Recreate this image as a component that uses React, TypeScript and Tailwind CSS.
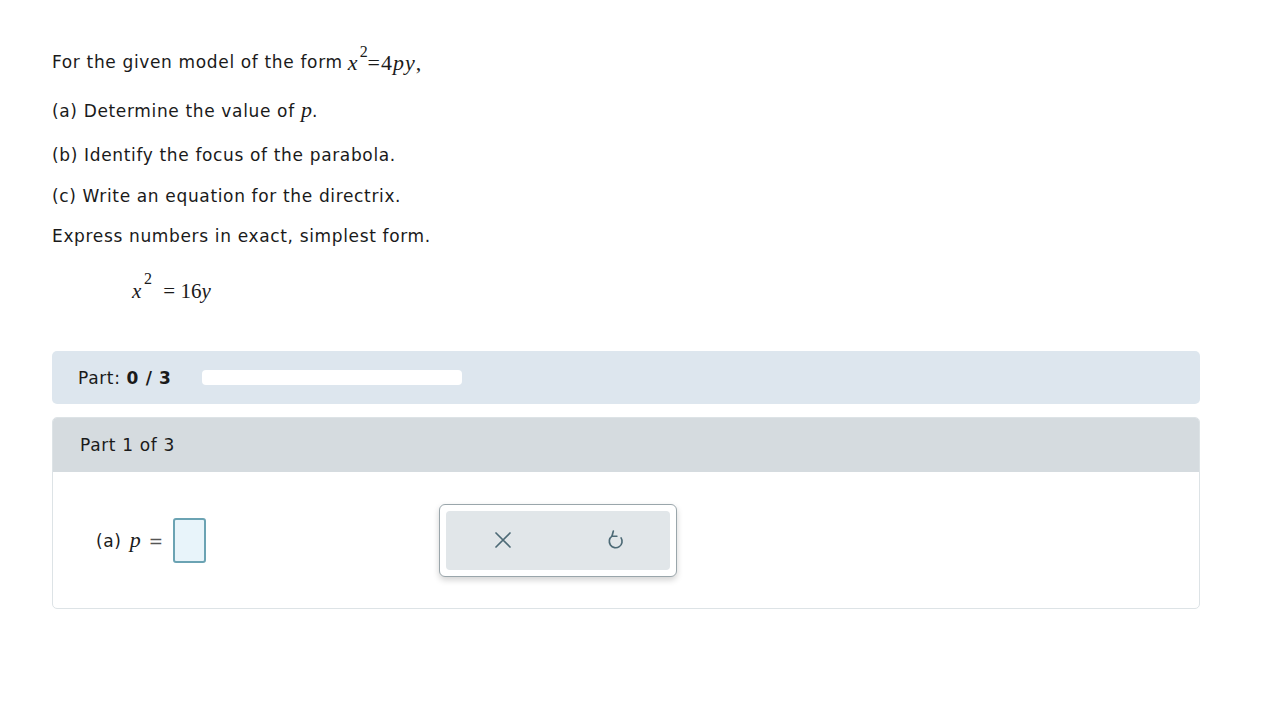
function Sup({ base, exp, gap }: { base: string; exp: string; gap: string }) {
  return (
    <span className={`relative inline-block ${gap}`}>
      <i>{base}</i>
      <span className="absolute -top-[8px] left-[12px] text-[16px] not-italic leading-none">{exp}</span>
    </span>
  );
}

function CloseIcon() {
  return (
    <svg width="18" height="18" viewBox="0 0 18 18" fill="none" stroke="#4d6a76" strokeWidth="1.7" strokeLinecap="round">
      <path d="M2 2 L16 16 M16 2 L2 16" />
    </svg>
  );
}

function UndoIcon() {
  return (
    <svg width="18" height="21" viewBox="0 0 16 19" fill="none" stroke="#4d6a76" strokeWidth="1.5" strokeLinecap="round" strokeLinejoin="round">
      <path d="M4.4 6.4 A5.8 5.8 0 1 0 12.6 8" />
      <path d="M5.6 1.8 L4.4 6.4 L8.8 6.6" />
    </svg>
  );
}

export default function App() {
  return (
    <div className="min-h-screen bg-white text-[#1a1a1a] font-['DejaVu_Sans',Verdana,sans-serif] text-[17px] leading-6 tracking-[0.65px]">
      <div className="pl-[52px] pr-[62px] pt-[30px]">
        <div className="flex flex-col">
          <p className="h-[44px] flex items-end">
            For the given model of the form{" "}
            <span className="ml-[5px] font-['Liberation_Serif',serif] text-[22px] leading-none tracking-[1px]">
              <Sup base="x" exp="2" gap="mr-[9px]" />
              <span>=4</span>
              <i>py</i>,
            </span>
          </p>
          <p className="mt-[24px]">
            (a) Determine the value of{" "}
            <i className="font-['Liberation_Serif',serif] text-[22px] tracking-normal">p</i>.
          </p>
          <p className="mt-[20px]">(b) Identify the focus of the parabola.</p>
          <p className="mt-[17px]">(c) Write an equation for the directrix.</p>
          <p className="mt-[16px]">Express numbers in exact, simplest form.</p>
          <p className="mt-[31px] pl-[80px] font-['Liberation_Serif',serif] text-[21px] tracking-normal">
            <Sup base="x" exp="2" gap="mr-[22px]" />
            <span>= 16</span>
            <i>y</i>
          </p>
        </div>

        <div className="mt-[48px] h-[53px] rounded-[5px] bg-[#dde6ee] flex items-center pl-[26px] gap-[30px]">
          <span>
            Part: <b>0 / 3</b>
          </span>
          <div className="w-[260px] h-[15px] rounded-[4px] bg-white" />
        </div>

        <div className="mt-[13px] rounded-[5px] border border-[#dde3e6] overflow-hidden">
          <div className="h-[54px] bg-[#d5dbdf] flex items-center pl-[27px]">Part 1 of 3</div>
          <div className="h-[136px] flex items-center">
            <div className="pl-[43px] flex items-center w-[386px]">
              <span className="flex items-baseline">
                <span>(a)</span>
                <i className="ml-[8px] font-['Liberation_Serif',serif] text-[22px] tracking-normal">p</i>
                <span className="ml-[8px] text-[#555]">=</span>
              </span>
              <div className="ml-[9px] w-[33px] h-[45px] rounded-[3px] border-2 border-[#6ba3b3] bg-[#e8f4fa]" />
            </div>
            <div className="w-[238px] h-[73px] rounded-[6px] border border-[#9aa6ab] bg-white p-[6px] shadow-[0_3px_6px_rgba(0,0,0,0.18)]">
              <div className="h-full rounded-[4px] bg-[#e1e6e9] flex items-center">
                <div className="w-[112px] flex justify-center pl-[2px]">
                  <CloseIcon />
                </div>
                <div className="flex-1 flex justify-center pl-[4px] pb-[2px]">
                  <UndoIcon />
                </div>
              </div>
            </div>
          </div>
        </div>
      </div>
    </div>
  );
}
